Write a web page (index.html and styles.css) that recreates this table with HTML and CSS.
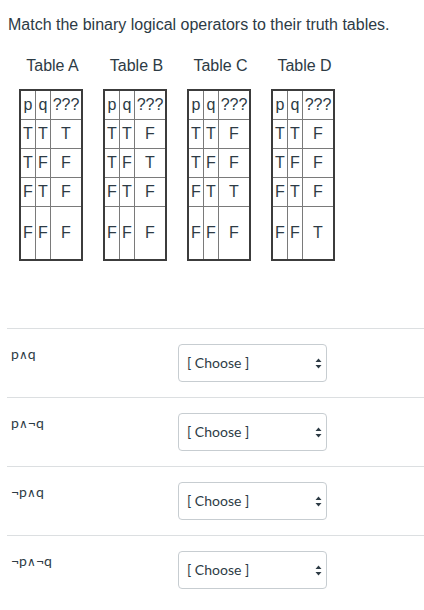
FILE: index.html
```html
<!DOCTYPE html>
<html>
<head>
<meta charset="utf-8">
<link rel="stylesheet" href="styles.css">
</head>
<body>
<div class="page">
  <div class="question">Match the binary logical operators to their truth tables.</div>
  <div class="tables">
    <div class="tcol">
      <div class="thead">Table A</div>
      <table class="truth">
        <tr><td>p</td><td>q</td><td>???</td></tr>
        <tr><td>T</td><td>T</td><td>T</td></tr>
        <tr><td>T</td><td>F</td><td>F</td></tr>
        <tr><td>F</td><td>T</td><td>F</td></tr>
        <tr class="last"><td>F</td><td>F</td><td>F</td></tr>
      </table>
    </div>
    <div class="tcol">
      <div class="thead">Table B</div>
      <table class="truth">
        <tr><td>p</td><td>q</td><td>???</td></tr>
        <tr><td>T</td><td>T</td><td>F</td></tr>
        <tr><td>T</td><td>F</td><td>T</td></tr>
        <tr><td>F</td><td>T</td><td>F</td></tr>
        <tr class="last"><td>F</td><td>F</td><td>F</td></tr>
      </table>
    </div>
    <div class="tcol">
      <div class="thead">Table C</div>
      <table class="truth">
        <tr><td>p</td><td>q</td><td>???</td></tr>
        <tr><td>T</td><td>T</td><td>F</td></tr>
        <tr><td>T</td><td>F</td><td>F</td></tr>
        <tr><td>F</td><td>T</td><td>T</td></tr>
        <tr class="last"><td>F</td><td>F</td><td>F</td></tr>
      </table>
    </div>
    <div class="tcol">
      <div class="thead">Table D</div>
      <table class="truth">
        <tr><td>p</td><td>q</td><td>???</td></tr>
        <tr><td>T</td><td>T</td><td>F</td></tr>
        <tr><td>T</td><td>F</td><td>F</td></tr>
        <tr><td>F</td><td>T</td><td>F</td></tr>
        <tr class="last"><td>F</td><td>F</td><td>T</td></tr>
      </table>
    </div>
  </div>
  <div class="answers">
    <div class="arow">
      <div class="alabel">p<span class="op">∧</span>q</div>
      <div class="select"><span>[ Choose ]</span>
        <svg class="arrows" width="7" height="11" viewBox="0 0 7 11"><path d="M3.5 0.5 L6.5 4 L0.5 4 Z M0.5 7 L6.5 7 L3.5 10.5 Z" fill="#2d3b45"/></svg>
      </div>
    </div>
    <div class="arow">
      <div class="alabel">p<span class="op">∧</span>¬q</div>
      <div class="select"><span>[ Choose ]</span>
        <svg class="arrows" width="7" height="11" viewBox="0 0 7 11"><path d="M3.5 0.5 L6.5 4 L0.5 4 Z M0.5 7 L6.5 7 L3.5 10.5 Z" fill="#2d3b45"/></svg>
      </div>
    </div>
    <div class="arow">
      <div class="alabel">¬p<span class="op">∧</span>q</div>
      <div class="select"><span>[ Choose ]</span>
        <svg class="arrows" width="7" height="11" viewBox="0 0 7 11"><path d="M3.5 0.5 L6.5 4 L0.5 4 Z M0.5 7 L6.5 7 L3.5 10.5 Z" fill="#2d3b45"/></svg>
      </div>
    </div>
    <div class="arow">
      <div class="alabel">¬p<span class="op">∧</span>¬q</div>
      <div class="select"><span>[ Choose ]</span>
        <svg class="arrows" width="7" height="11" viewBox="0 0 7 11"><path d="M3.5 0.5 L6.5 4 L0.5 4 Z M0.5 7 L6.5 7 L3.5 10.5 Z" fill="#2d3b45"/></svg>
      </div>
    </div>
  </div>
</div>
</body>
</html>
```
FILE: styles.css
```css
html, body {
  margin: 0;
  padding: 0;
  background: #ffffff;
}
.page {
  padding: 15px 0 0 0;
  color: #2d3b45;
  font-family: "Liberation Sans", Arial, sans-serif;
}
.question {
  margin-left: 8px;
  font-size: 16px;
  line-height: 20px;
}
.tables {
  display: flex;
  gap: 20px;
  margin: 21px 0 0 19px;
}
.tcol {
  display: flex;
  flex-direction: column;
  align-items: flex-start;
  width: 64px;
}
.thead {
  align-self: stretch;
  text-align: center;
  font-size: 16px;
  line-height: 20px;
  padding-left: 3px;
  white-space: nowrap;
  margin-bottom: 13px;
}
.truth {
  border-collapse: separate;
  border-spacing: 0;
  border: 2px solid #3c3c3c;
  table-layout: fixed;
  width: 64px;
  font-size: 16px;
}
.truth td {
  padding: 0;
  text-align: center;
  line-height: 28px;
  border-right: 1px solid #7a7a7a;
  border-bottom: 1px solid #7a7a7a;
  width: 14px;
}
.truth td:last-child {
  border-right: none;
  width: 30px;
}
.truth tr.last td {
  border-bottom: none;
  line-height: 52px;
}
.answers {
  margin: 67px 0 0 7px;
  font-family: Lato, "Liberation Sans", sans-serif;
  font-size: 14px;
}
.arow {
  display: flex;
  align-items: flex-start;
  border-top: 1px solid #dcdfe1;
  padding: 15px 0;
}
.alabel {
  width: 171px;
  padding-left: 4px;
  box-sizing: border-box;
  line-height: 20px;
}
.op {
  font-family: "Liberation Sans", sans-serif;
  font-size: 12px;
}
.select {
  width: 149px;
  height: 38px;
  box-sizing: border-box;
  border: 1px solid #c7cdd1;
  border-radius: 4px;
  display: flex;
  align-items: center;
  justify-content: space-between;
  padding: 0 4px 0 8px;
  line-height: 20px;
}
.arrows {
  display: block;
}
```
